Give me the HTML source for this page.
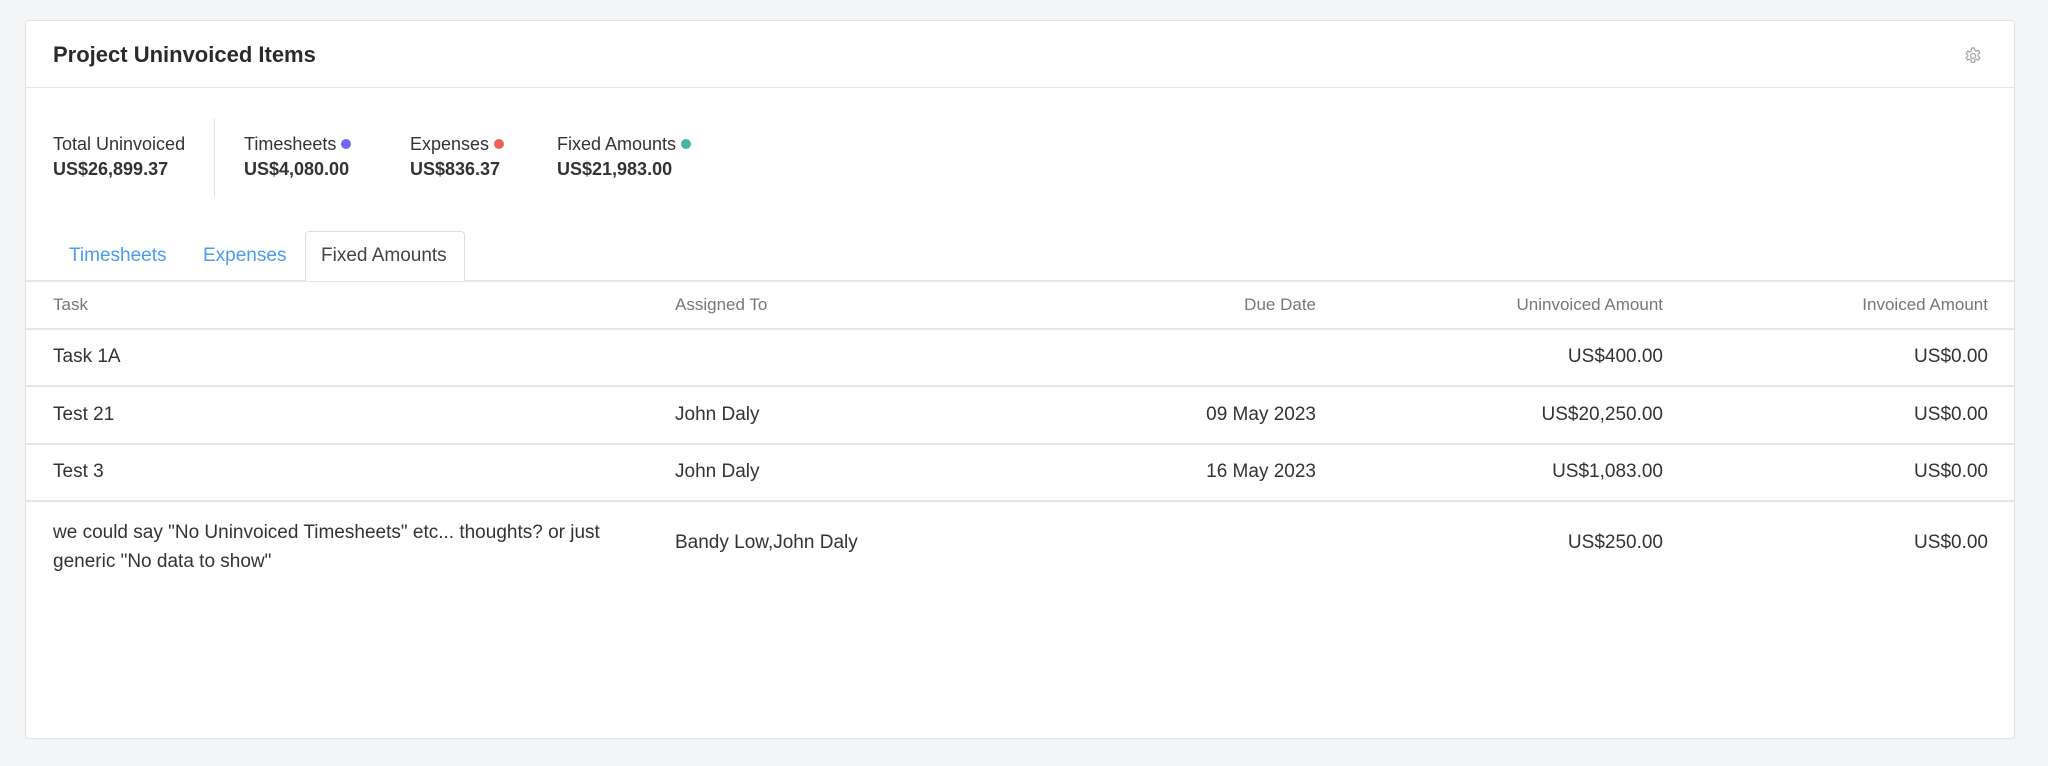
<!DOCTYPE html>
<html><head><meta charset="utf-8"><style>
*{margin:0;padding:0;box-sizing:border-box}
body{width:2048px;height:766px;background:#f4f5f7;font-family:"Liberation Sans",sans-serif;color:#333;position:relative;overflow:hidden}
.card{position:absolute;left:25px;top:20px;width:1990px;height:719px;background:#fff;border:1px solid #dfe1e4;border-radius:4px}
.a{position:absolute;white-space:nowrap}
.hl{position:absolute;left:0;right:0;height:2px;background:#e6e7e9}
.lbl{font-size:18px;color:#333}
.val{font-size:18px;font-weight:bold;color:#333}
.dot{display:inline-block;width:10px;height:10px;border-radius:50%;margin-left:5px;vertical-align:1px}
.th{font-size:17px;color:#777}
.td{font-size:19px;color:#333}
.r{text-align:right}
</style></head><body>
<div class="card">
<div class="a" style="left:27px;top:21px;font-size:22px;font-weight:bold;color:#2b2b2b">Project Uninvoiced Items</div>
<svg class="a" style="left:1937px;top:25px" width="20" height="20" viewBox="0 0 24 24" fill="none" stroke="#aaa" stroke-width="1.6"><path d="M10.3 2.5h3.4l.5 2.6 1.8 1 2.5-.9 1.7 2.9-2 1.8v2.2l2 1.8-1.7 2.9-2.5-.9-1.8 1-.5 2.6h-3.4l-.5-2.6-1.8-1-2.5.9-1.7-2.9 2-1.8V11l-2-1.8 1.7-2.9 2.5.9 1.8-1z"/><circle cx="12" cy="12" r="3"/></svg>
<div class="hl" style="top:66px;height:1px"></div>
<div class="a lbl" style="left:27px;top:113px">Total Uninvoiced</div>
<div class="a val" style="left:27px;top:138px">US$26,899.37</div>
<div class="a" style="left:188px;top:97px;width:1px;height:79px;background:#e0e0e0"></div>
<div class="a lbl" style="left:218px;top:113px">Timesheets<span class="dot" style="background:#6d6af0"></span></div>
<div class="a val" style="left:218px;top:138px">US$4,080.00</div>
<div class="a lbl" style="left:384px;top:113px">Expenses<span class="dot" style="background:#ee6352"></span></div>
<div class="a val" style="left:384px;top:138px">US$836.37</div>
<div class="a lbl" style="left:531px;top:113px">Fixed Amounts<span class="dot" style="background:#48b5a3"></span></div>
<div class="a val" style="left:531px;top:138px">US$21,983.00</div>
<div class="a" style="left:279px;top:210px;width:160px;height:50px;border:1px solid #dcdee1;border-bottom:none;border-radius:4px 4px 0 0;background:#fff;z-index:2"></div>
<div class="a" style="left:43px;top:224px;font-size:19px;color:#4a9ded">Timesheets</div>
<div class="a" style="left:177px;top:224px;font-size:19px;color:#4a9ded">Expenses</div>
<div class="a" style="left:295px;top:224px;font-size:19px;color:#444;z-index:3">Fixed Amounts</div>
<div class="hl" style="top:259px"></div>
<div class="a th" style="left:27px;top:274px">Task</div>
<div class="a th" style="left:649px;top:274px">Assigned To</div>
<div class="a th r" style="right:698px;top:274px">Due Date</div>
<div class="a th r" style="right:351px;top:274px">Uninvoiced Amount</div>
<div class="a th r" style="right:26px;top:274px">Invoiced Amount</div>
<div class="hl" style="top:307px"></div>
<div class="a td" style="left:27px;top:325px">Task 1A</div>
<div class="a td r" style="right:351px;top:325px">US$400.00</div>
<div class="a td r" style="right:26px;top:325px">US$0.00</div>
<div class="hl" style="top:364px"></div>
<div class="a td" style="left:27px;top:383px">Test 21</div>
<div class="a td" style="left:649px;top:383px">John Daly</div>
<div class="a td r" style="right:698px;top:383px">09 May 2023</div>
<div class="a td r" style="right:351px;top:383px">US$20,250.00</div>
<div class="a td r" style="right:26px;top:383px">US$0.00</div>
<div class="hl" style="top:422px"></div>
<div class="a td" style="left:27px;top:440px">Test 3</div>
<div class="a td" style="left:649px;top:440px">John Daly</div>
<div class="a td r" style="right:698px;top:440px">16 May 2023</div>
<div class="a td r" style="right:351px;top:440px">US$1,083.00</div>
<div class="a td r" style="right:26px;top:440px">US$0.00</div>
<div class="hl" style="top:479px"></div>
<div class="a td" style="left:27px;top:497px;line-height:29px">we could say "No Uninvoiced Timesheets" etc... thoughts? or just<br>generic "No data to show"</div>
<div class="a td" style="left:649px;top:511px">Bandy Low,John Daly</div>
<div class="a td r" style="right:351px;top:511px">US$250.00</div>
<div class="a td r" style="right:26px;top:511px">US$0.00</div>
</div>
</body></html>
